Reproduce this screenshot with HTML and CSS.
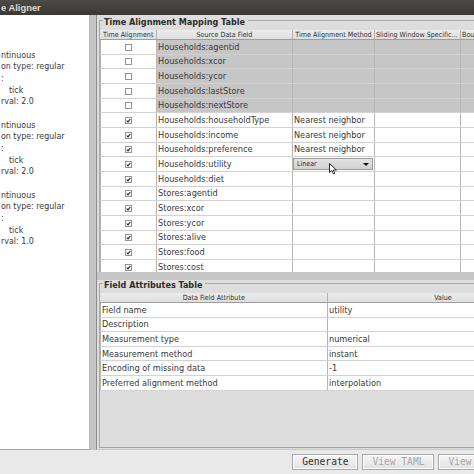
FILE: index.html
```html
<!DOCTYPE html>
<html lang="en">
<head>
    <meta charset="UTF-8">
    <meta name="viewport" content="width=device-width, initial-scale=1.0">
    <title>Time Aligner</title>
    <link rel="stylesheet" href="styles.css">
</head>
<body>
    <div class="window">
        <div class="titlebar">e Aligner</div>

        <div class="main">
            <!-- Left info pane (scrolled horizontally) -->
            <div class="side">
                <div class="info">
                    <div>ntinuous</div>
                    <div>on type: regular</div>
                    <div>:</div>
                    <div class="indent">tick</div>
                    <div>rval: 2.0</div>
                </div>
                <div class="info">
                    <div>ntinuous</div>
                    <div>on type: regular</div>
                    <div>:</div>
                    <div class="indent">tick</div>
                    <div>rval: 2.0</div>
                </div>
                <div class="info">
                    <div>ntinuous</div>
                    <div>on type: regular</div>
                    <div>:</div>
                    <div class="indent">tick</div>
                    <div>rval: 1.0</div>
                </div>
            </div>

            <div class="vsplit"></div>

            <div class="content">
                <!-- Mapping table -->
                <section class="group mapping">
                    <h2 class="group-title">Time Alignment Mapping Table</h2>
                    <div class="group-body">
                        <div class="table-view">
                            <table class="grid map-table">
                                <colgroup>
                                    <col class="c-check">
                                    <col class="c-field">
                                    <col class="c-method">
                                    <col class="c-window">
                                    <col class="c-bound">
                                </colgroup>
                                <thead>
                                    <tr>
                                        <th>Time Alignment</th>
                                        <th>Source Data Field</th>
                                        <th>Time Alignment Method</th>
                                        <th>Sliding Window Specification</th>
                                        <th>Boundary Condition</th>
                                    </tr>
                                </thead>
                                <tbody>
                                    <tr class="off"><td><span class="check"></span></td><td>Households:agentid</td><td></td><td></td><td></td></tr>
                                    <tr class="off"><td><span class="check"></span></td><td>Households:xcor</td><td></td><td></td><td></td></tr>
                                    <tr class="off"><td><span class="check"></span></td><td>Households:ycor</td><td></td><td></td><td></td></tr>
                                    <tr class="off"><td><span class="check"></span></td><td>Households:lastStore</td><td></td><td></td><td></td></tr>
                                    <tr class="off"><td><span class="check"></span></td><td>Households:nextStore</td><td></td><td></td><td></td></tr>
                                    <tr><td><span class="check on"><svg viewBox="0 0 5 5"><path d="M0.7 2.5 L2 3.9 L4.3 1"/></svg></span></td><td>Households:householdType</td><td>Nearest neighbor</td><td></td><td></td></tr>
                                    <tr><td><span class="check on"><svg viewBox="0 0 5 5"><path d="M0.7 2.5 L2 3.9 L4.3 1"/></svg></span></td><td>Households:income</td><td>Nearest neighbor</td><td></td><td></td></tr>
                                    <tr><td><span class="check on"><svg viewBox="0 0 5 5"><path d="M0.7 2.5 L2 3.9 L4.3 1"/></svg></span></td><td>Households:preference</td><td>Nearest neighbor</td><td></td><td></td></tr>
                                    <tr>
                                        <td><span class="check on"><svg viewBox="0 0 5 5"><path d="M0.7 2.5 L2 3.9 L4.3 1"/></svg></span></td>
                                        <td>Households:utility</td>
                                        <td class="editing">
                                            <div class="combo">
                                                <span>Linear</span>
                                                <span class="combo-arrow"></span>
                                                <svg class="cursor" viewBox="0 0 8 11.5"><path d="M0.5 0.5 V9.6 L2.8 7.5 L4.4 10.9 L5.8 10.3 L4.3 7 H7.4 Z"/></svg>
                                            </div>
                                        </td>
                                        <td></td><td></td>
                                    </tr>
                                    <tr><td><span class="check on"><svg viewBox="0 0 5 5"><path d="M0.7 2.5 L2 3.9 L4.3 1"/></svg></span></td><td>Households:diet</td><td></td><td></td><td></td></tr>
                                    <tr><td><span class="check on"><svg viewBox="0 0 5 5"><path d="M0.7 2.5 L2 3.9 L4.3 1"/></svg></span></td><td>Stores:agentid</td><td></td><td></td><td></td></tr>
                                    <tr><td><span class="check on"><svg viewBox="0 0 5 5"><path d="M0.7 2.5 L2 3.9 L4.3 1"/></svg></span></td><td>Stores:xcor</td><td></td><td></td><td></td></tr>
                                    <tr><td><span class="check on"><svg viewBox="0 0 5 5"><path d="M0.7 2.5 L2 3.9 L4.3 1"/></svg></span></td><td>Stores:ycor</td><td></td><td></td><td></td></tr>
                                    <tr><td><span class="check on"><svg viewBox="0 0 5 5"><path d="M0.7 2.5 L2 3.9 L4.3 1"/></svg></span></td><td>Stores:alive</td><td></td><td></td><td></td></tr>
                                    <tr><td><span class="check on"><svg viewBox="0 0 5 5"><path d="M0.7 2.5 L2 3.9 L4.3 1"/></svg></span></td><td>Stores:food</td><td></td><td></td><td></td></tr>
                                    <tr><td><span class="check on"><svg viewBox="0 0 5 5"><path d="M0.7 2.5 L2 3.9 L4.3 1"/></svg></span></td><td>Stores:cost</td><td></td><td></td><td></td></tr>
                                </tbody>
                            </table>
                        </div>
                    </div>
                </section>

                <div class="hsplit"></div>

                <!-- Attributes of the selected field -->
                <section class="group attrs">
                    <h2 class="group-title">Field Attributes Table</h2>
                    <div class="group-body">
                        <table class="grid attr-table">
                            <colgroup>
                                <col class="c-attr">
                                <col class="c-value">
                            </colgroup>
                            <thead>
                                <tr>
                                    <th>Data Field Attribute</th>
                                    <th>Value</th>
                                </tr>
                            </thead>
                            <tbody>
                                <tr><td>Field name</td><td>utility</td></tr>
                                <tr><td>Description</td><td></td></tr>
                                <tr><td>Measurement type</td><td>numerical</td></tr>
                                <tr><td>Measurement method</td><td>instant</td></tr>
                                <tr><td>Encoding of missing data</td><td>-1</td></tr>
                                <tr><td>Preferred alignment method</td><td>interpolation</td></tr>
                            </tbody>
                        </table>
                    </div>
                </section>
            </div>
        </div>

        <div class="footer">
            <div class="buttons">
                <button>Generate</button>
                <button disabled>View TAML</button>
                <button disabled>View Output</button>
            </div>
        </div>
    </div>
</body>
</html>
```

FILE: styles.css
```css
body {
    margin: 0;
    background-color: #e9e9e9;
    font-family: "DejaVu Sans Condensed", "DejaVu Sans", sans-serif;
    overflow: hidden;
}

.window {
    width: 474px;
    height: 474px;
    display: flex;
    flex-direction: column;
    overflow: hidden;
}

.titlebar {
    height: 15px;
    flex-shrink: 0;
    padding-left: 1px;
    background: linear-gradient(#4c4b47, #393834);
    color: #dfdbd2;
    font: bold 9.4px/15px "Liberation Sans", sans-serif;
    white-space: nowrap;
}

.main {
    height: 435px;
    display: flex;
    flex-shrink: 0;
}

/* left pane */
.side {
    width: 90px;
    flex-shrink: 0;
    padding-top: 34.5px;
    box-sizing: border-box;
    background-color: #fff;
    border-right: 1px solid #b9b9b9;
    border-bottom: 1px solid #a4a4a4;
    color: #3a3a3a;
    font-size: 8.8px;
    line-height: 11.67px;
    white-space: nowrap;
    overflow: hidden;
}

.info {
    margin-bottom: 11.67px;
}

.info div {
    padding-left: 1px;
}

.info .indent {
    padding-left: 9px;
}

/* splitters */
.vsplit,
.hsplit {
    flex-shrink: 0;
    background-color: #d9d9d9;
    background-image: radial-gradient(#bcbcbc 0.6px, transparent 0.9px);
    background-size: 2px 2px;
}

.vsplit {
    width: 6px;
}

.hsplit {
    height: 8px;
    margin-left: -2px;
}

/* right pane */
.content {
    flex: 1;
    min-width: 0;
    display: flex;
    flex-direction: column;
    padding: 2px 0 1px 2px;
    background-color: #dddddd;
    border-left: 1px solid #8c8c8c;
    border-bottom: 1px solid #c9c9c9;
    overflow: hidden;
}

.group {
    display: flex;
    flex-direction: column;
}

.group-title {
    display: flex;
    margin: 0;
    color: #2c2c2c;
    font-size: 9px;
    font-weight: bold;
    line-height: 11px;
    white-space: nowrap;
}

.group-title::before {
    content: "";
    width: 3px;
    margin: 3px 1px 0 0;
    border-top: 1px solid #a9a9a9;
    border-left: 1px solid #a9a9a9;
}

.group-title::after {
    content: "";
    flex: 1;
    margin: 3px 0 0 3px;
    border-top: 1px solid #a9a9a9;
}

.group-body {
    flex: 1;
    padding-top: 2px;
    border-left: 1px solid #a9a9a9;
}

.attrs {
    flex: 1;
}

.attrs .group-body {
    border-bottom: 1px solid #a2a2a2;
}

.table-view {
    height: 242px;
    overflow: hidden;
}

/* tables */
.grid {
    border-collapse: collapse;
    table-layout: fixed;
    color: #383838;
    font-size: 9.1px;
}

.map-table {
    width: 420px;
}

.attr-table {
    width: 458px;
}

.c-check { width: 56px; }
.c-field { width: 136px; }
.c-method { width: 82px; }
.c-window { width: 86px; }
.c-bound { width: 60px; }
.c-attr { width: 227px; }
.c-value { width: 231px; }

.grid th {
    height: 9px;
    padding: 0 1px;
    background: linear-gradient(#ececec, #dedede);
    border-right: 1px solid #b2b2b2;
    border-bottom: 1px solid #9e9e9e;
    color: #333;
    font-size: 7.1px;
    font-weight: normal;
    line-height: 8px;
    white-space: nowrap;
    overflow: hidden;
    text-overflow: ellipsis;
}

.grid tbody tr {
    height: 14.67px;
}

.attr-table tbody tr {
    height: 14.6px;
}

.grid td {
    padding: 0 1px;
    background-color: #fff;
    border-top: 1px solid #d2d2d2;
    border-bottom: 1px solid #d2d2d2;
    border-left: 1px solid #b6b6b6;
    border-right: 1px solid #b6b6b6;
    white-space: nowrap;
    overflow: hidden;
}

.map-table td:first-child {
    text-align: center;
}

.grid tr.off td + td {
    background-color: #c6c6c6;
}

/* checkboxes */
.check {
    display: inline-block;
    width: 7px;
    height: 7px;
    box-sizing: border-box;
    border: 1px solid #939393;
    background-color: #fff;
    vertical-align: middle;
}

.check svg {
    display: block;
    width: 5px;
    height: 5px;
    fill: none;
    stroke: #1c1c1c;
    stroke-width: 1.1;
}

/* combo box editor */
.grid td.editing {
    padding: 0;
    overflow: visible;
}

.combo {
    position: relative;
    display: flex;
    align-items: center;
    justify-content: space-between;
    height: 12px;
    margin-right: 1px;
    padding: 0 3px;
    box-sizing: border-box;
    background: linear-gradient(#e4e4e4, #d0d0d0);
    border: 1px solid #9c9c9c;
    color: #2a2a2a;
    font-size: 7px;
}

.combo-arrow {
    width: 0;
    height: 0;
    border-left: 3px solid transparent;
    border-right: 3px solid transparent;
    border-top: 3.5px solid #111;
}

.cursor {
    position: absolute;
    left: 35px;
    top: 4px;
    width: 8px;
    height: 11.5px;
    z-index: 2;
    fill: #fff;
    stroke: #111;
    stroke-width: 0.9;
}

/* bottom buttons */
.footer {
    flex: 1;
    display: flex;
    justify-content: flex-end;
    align-items: flex-start;
    padding-top: 4px;
    box-sizing: border-box;
    background-color: #e9e9e9;
    overflow: hidden;
}

.buttons {
    display: flex;
    gap: 4px;
    flex-shrink: 0;
    margin-right: -48px;
}

button {
    height: 16px;
    margin: 0;
    padding: 0 9px;
    background: linear-gradient(#f6f6f6, #e1e1e1);
    border: 1px solid #a9a9a9;
    border-radius: 0;
    box-shadow: inset 0 0 0 1px #fbfbfb;
    color: #303030;
    font: 9.6px/14px "DejaVu Sans Mono", monospace;
    white-space: nowrap;
}

button:disabled {
    color: #a8a8a8;
}
```
